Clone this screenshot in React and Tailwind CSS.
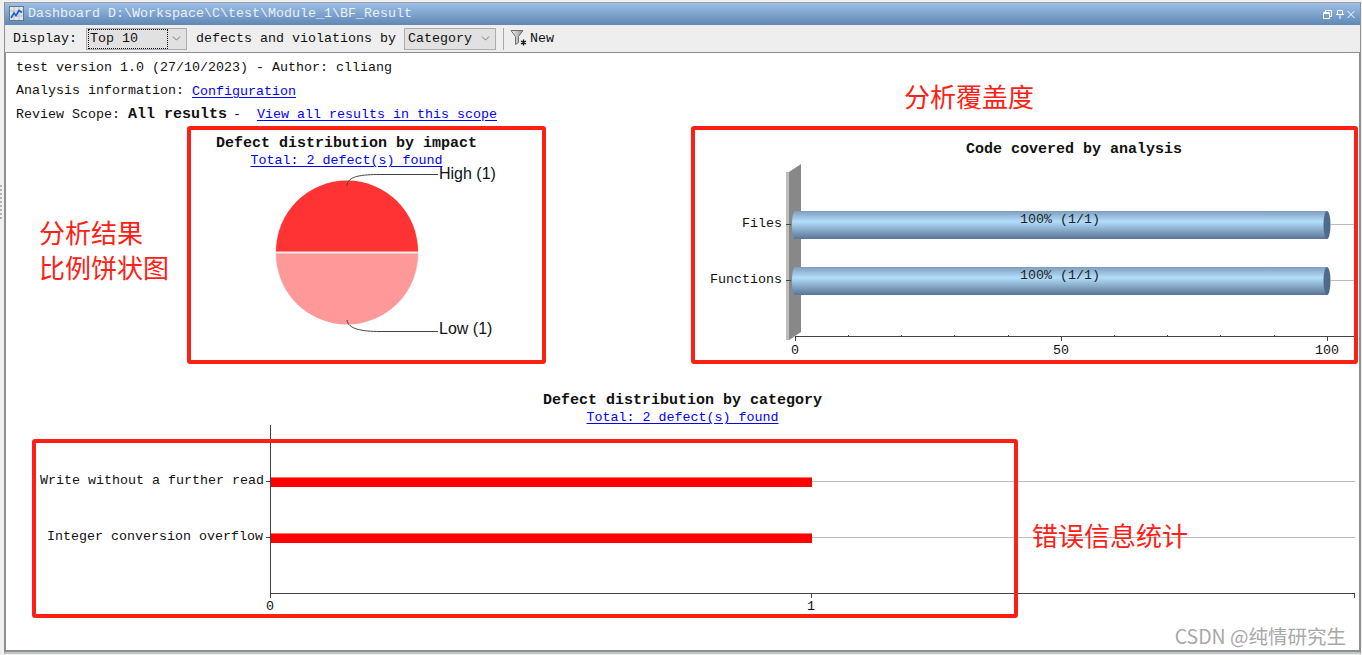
import { ChevronDown } from 'lucide-react';

const linkCls = 'text-[#0000ff] underline underline-offset-2';
const cjk = "font-['Noto_Sans_CJK_SC',sans-serif]";
const noteCls = `text-[26px] leading-[34px] text-[#ff2015] ${cjk}`;
const gripDots = [0, 1, 2, 3, 4, 5, 6, 7, 8];

const TitleIcon = () => (
  <svg width="15" height="15" viewBox="0 0 15 15">
    <rect x="0.5" y="0.5" width="14" height="14" fill="#dfe6ee" stroke="#6b7683" />
    <path d="M5 1V14M10 1V14M1 5H14M1 10H14" stroke="#b8c2cc" />
    <path d="M2 12 L5 7 L7 9.500 L10 4.500 L13 6.500" fill="none" stroke="#1f5fd0" strokeWidth="1.6" />
  </svg>
);

const FunnelIcon = () => (
  <svg width="18" height="18" viewBox="0 0 18 18">
    <defs>
      <linearGradient id="funnelFill" x1="0" y1="0" x2="1" y2="0">
        <stop offset="0" stopColor="#f4f4f4" />
        <stop offset="1" stopColor="#8f8f8f" />
      </linearGradient>
    </defs>
    <path d="M1 1.500 H13 L8.500 7.500 V13.500 L5.500 15.500 V7.500 Z" fill="url(#funnelFill)" stroke="#6e6e6e" />
    <path d="M13.500 10.500 V16.500 M11 12 L16 15 M16 12 L11 15" stroke="#111" strokeWidth="1.3" />
  </svg>
);

const WindowButtons = () => (
  <svg width="32" height="9" viewBox="0 0 32 9" className="text-white">
    <path d="M0.500 2.500 H6.500 V8.500 H0.500 Z M0.500 3.500 H6.500 M2.500 2 V0.500 H8.500 V6.500 H7" fill="none" stroke="currentColor" />
    <path d="M14.500 0.500 H19.500 V4.500 H14.500 Z M13 4.500 H21 M17 5 V9" fill="none" stroke="currentColor" />
    <path d="M24.500 1 L31.500 8 M31.500 1 L24.500 8" fill="none" stroke="currentColor" />
  </svg>
);

const PieChart = () => (
  <svg className="block overflow-visible" width="351" height="192" viewBox="191 168 351 192">
    <circle cx="347" cy="252.5" r="72" fill="#eeeeee" />
    <path d="M276 251.5 A71 71 0 0 1 418 251.5 Z" fill="#ff3333" />
    <path d="M276 253.5 A71 71 0 0 0 418 253.5 Z" fill="#ff9999" />
    <path d="M347 186 C347 176 362 174.500 380 174.500 H438" fill="none" stroke="#444" />
    <path d="M347 320 C348 329 362 331.500 380 331.500 H438" fill="none" stroke="#444" />
    <text x="439" y="179" fill="#111" className="font-['Liberation_Sans',sans-serif] text-[16px]">High (1)</text>
    <text x="439" y="334" fill="#111" className="font-['Liberation_Sans',sans-serif] text-[16px]">Low (1)</text>
  </svg>
);

const minor = [848, 901, 954, 1008, 1114, 1167, 1220, 1274];

const CoverageBar = ({ y, label, pct }) => (
  <g>
    <text x="782" y={y + 16} textAnchor="end" fill="#111" className="text-[13.33px]">{label}</text>
    <path d={`M786 ${y + 13.500}H791`} stroke="#444" />
    <path d={`M1331 ${y + 13.500}H1354`} stroke="#bbbbbb" />
    <path d={`M795 ${y}H1327V${y + 28}H795C791 ${y + 28} 791 ${y} 795 ${y}Z`} fill="url(#barFill)" />
    <ellipse cx="1327" cy={y + 14} rx="3.500" ry="14" fill="#4f6a8f" />
    <text x="1060" y={y + 12} textAnchor="middle" fill="#222" className="text-[13.33px]">{pct}</text>
  </g>
);

const CoverageChart = () => (
  <svg className="block" width="659" height="199" viewBox="695 161 659 199">
    <defs>
      <linearGradient id="barFill" x1="0" y1="0" x2="0" y2="1">
        <stop offset="0" stopColor="#7f9dbd" />
        <stop offset="0.38" stopColor="#b2defb" />
        <stop offset="1" stopColor="#5a7494" />
      </linearGradient>
    </defs>
    <rect x="786" y="172" width="3" height="168" fill="#bdbdbd" />
    <path d="M789 172 L801 164 V332 L789 340 Z" fill="#888888" />
    <CoverageBar y={211} label="Files" pct="100% (1/1)" />
    <CoverageBar y={267} label="Functions" pct="100% (1/1)" />
    <path d="M795 336.500H1354" stroke="#444" />
    {minor.map(x => <path key={x} d={`M${x + 0.5} 335V337`} stroke="#444" />)}
    {[795, 1061, 1327].map(x => <path key={x} d={`M${x + 0.5} 336V341`} stroke="#444" />)}
    <text x="795" y="354" textAnchor="middle" fill="#111" className="text-[13.33px]">0</text>
    <text x="1061" y="354" textAnchor="middle" fill="#111" className="text-[13.33px]">50</text>
    <text x="1327" y="354" textAnchor="middle" fill="#111" className="text-[13.33px]">100</text>
  </svg>
);

const CategoryBar = ({ y, label, end }) => (
  <g>
    <text x={end} y={y + 3} textAnchor="end" fill="#111" className="text-[13.33px]">{label}</text>
    <path d={`M266 ${y + 0.5}H270`} stroke="#444" />
    <path d={`M812 ${y + 0.5}H1355`} stroke="#bbbbbb" />
    <rect x="271" y={y - 4} width="541" height="10" fill="#ff0000" />
    <rect x="271" y={y - 4} width="541" height="1" fill="#ff7070" />
  </g>
);

const CategoryChart = () => (
  <svg className="block" width="1354" height="190" viewBox="6 425 1354 190">
    <path d="M270.500 425V598" stroke="#444" />
    <path d="M270 593.500H1355" stroke="#444" />
    <CategoryBar y={481} label="Write without a further read" end={264} />
    <CategoryBar y={537} label="Integer conversion overflow" end={263} />
    <path d="M811.500 594V598M1354.500 594V598" stroke="#444" />
    <text x="270" y="610" textAnchor="middle" fill="#111" className="text-[13.33px]">0</text>
    <text x="811" y="610" textAnchor="middle" fill="#111" className="text-[13.33px]">1</text>
  </svg>
);

const Select = ({ value, width, focused }) => (
  <div className={`flex h-[22px] items-center justify-between border border-[#adadad] bg-[#e1e1e1] pl-[2px] pr-[3px] ${width}`}>
    <span className={`px-[1px] leading-[18px] ${focused ? 'w-[78px] outline-1 outline-dotted outline-black' : ''}`}>{value}</span>
    <ChevronDown size={13} strokeWidth={1.2} color="#444" />
  </div>
);

export default function App() {
  return (
    <div className="relative h-[655px] w-[1362px] overflow-hidden bg-[#f0f0f0] pb-[1px] pl-[4px] pr-[1px] pt-[2px] font-['Liberation_Mono','Noto_Sans_CJK_SC',monospace] text-[13.33px] text-[#111]">
      <div className="absolute left-0 top-[185px] flex flex-col gap-[2px]">
        {gripDots.map(d => <div key={d} className="h-[2px] w-[2px] bg-[#b0b0b0]" />)}
      </div>

      <div className="flex h-full flex-col border-x border-b-2 border-t border-x-[#909090] border-b-[#c4c4c4] border-t-[#a0a0a0]">
        <div className="flex h-[22px] items-center justify-between bg-gradient-to-b from-[#9dbfe8] to-[#5f88b4] pl-[4px] pr-[5px]">
          <div className="flex items-center gap-[4px] text-[#e9f0f8]">
            <TitleIcon />
            <span>Dashboard D:\Workspace\C\test\Module_1\BF_Result</span>
          </div>
          <WindowButtons />
        </div>

        <div className="flex h-[27px] items-center bg-[#eeeeee] pl-[8px]">
          <span className="w-[73px]">Display:</span>
          <Select value="Top 10" width="w-[101px]" focused />
          <span className="ml-[9px]">defects and violations by</span>
          <Select value="Category" width="ml-[8px] w-[92px]" />
          <div className="ml-[7px] h-[22px] w-px bg-[#a8a8a8]" />
          <div className="ml-[6px] flex items-center gap-[2px]">
            <FunnelIcon />
            <span>New</span>
          </div>
        </div>

        <div className="relative min-h-0 flex-1 border border-b-2 border-[#8a8f96] bg-white">
          <div className="px-[10px] pt-[3px]">
            <div className="flex h-[23px] items-center">test version 1.0 (27/10/2023) - Author: clliang</div>
            <div className="flex h-[25px] items-center pb-[1px]">
              Analysis information:
              <span className={`ml-[8px] mt-[1px] ${linkCls}`}>Configuration</span>
            </div>
            <div className="flex h-[22px] items-center">
              Review Scope:
              <b className="ml-[8px] text-[15px]">All results</b>
              <span className="ml-[6px]">-</span>
              <span className={`ml-[16px] ${linkCls}`}>View all results in this scope</span>
            </div>
          </div>

          <div className="flex">
            <div className={`ml-[33px] mt-[89px] w-[148px] ${noteCls}`}>
              <div>分析结果</div>
              <div className="mt-[1px]">比例饼状图</div>
            </div>
            <div className="h-[238px] w-[359px] rounded-[3px] border-4 border-[#ff2015]">
              <div className="ml-[25px] flex w-[261px] flex-col items-center whitespace-nowrap pt-[4px]">
                <b className="text-[15px] leading-[20px]">Defect distribution by impact</b>
                <span className={`leading-[14px] ${linkCls}`}>Total: 2 defect(s) found</span>
              </div>
              <PieChart />
            </div>
            <div className="ml-[145px] h-[238px] w-[667px] rounded-[3px] border-4 border-[#ff2015]">
              <div className="flex h-[31px] items-center pl-[271px] pt-[9px]">
                <b className="text-[15px]">Code covered by analysis</b>
              </div>
              <CoverageChart />
            </div>
          </div>

          <div className="mt-[28px] flex flex-col items-center">
            <b className="text-[15px] leading-[18px]">Defect distribution by category</b>
            <span className={`leading-[15px] ${linkCls}`}>Total: 2 defect(s) found</span>
          </div>

          <div className="relative">
            <CategoryChart />
            <div className="absolute left-[26px] top-[14px] h-[179px] w-[986px] rounded-[3px] border-4 border-[#ff2015]" />
            <div className={`absolute left-[1026px] top-[93px] ${noteCls}`}>错误信息统计</div>
          </div>

          <div className={`absolute left-[898px] top-[26px] ${noteCls}`}>分析覆盖度</div>
          <div className={`absolute bottom-[1px] right-[13px] text-[19.5px] leading-[26px] text-[#a8a8a8] ${cjk}`}>CSDN @纯情研究生</div>
        </div>
      </div>
    </div>
  );
}
